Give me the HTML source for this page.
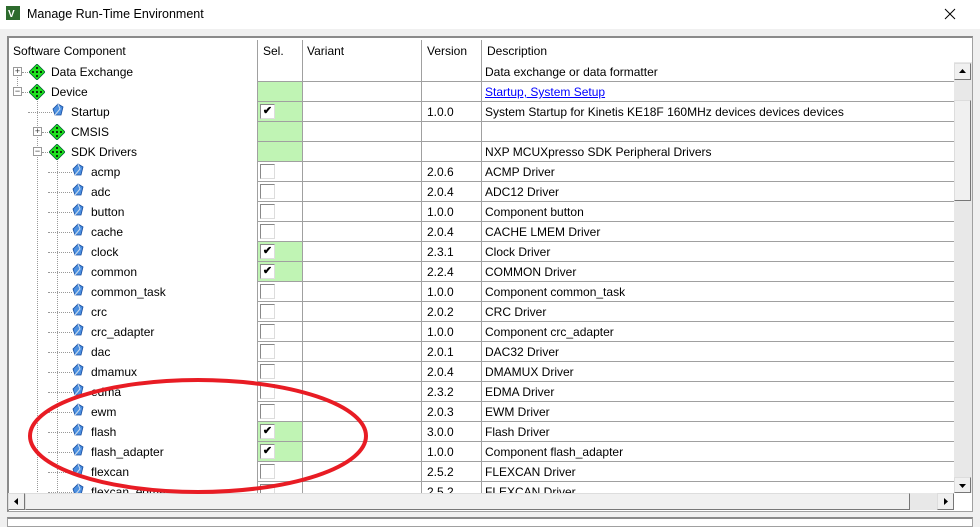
<!DOCTYPE html>
<html><head><style>
*{margin:0;padding:0;box-sizing:border-box}
body{width:980px;height:524px;background:#f0f0f0;font-family:"Liberation Sans",sans-serif;font-size:12px;color:#000;position:relative;overflow:hidden}
.title{position:absolute;left:0;top:0;width:980px;height:29px;background:#fff}
.title span{position:absolute;left:27px;top:7px;font-size:12.5px}
.panel{position:absolute;left:7px;top:36px;width:966px;height:476px;background:#fff;border:1px solid #a0a0a0;border-top:2px solid #8a8a8a;border-left:2px solid #8a8a8a}
.hdr{position:absolute;top:44px;font-size:12px}
.vl{position:absolute;width:1px;background:#a0a0a0}
.row{position:absolute;left:0;height:20px;width:954px}
.hl{position:absolute;left:257px;width:697px;height:1px;background:#a0a0a0}
.t{position:absolute;top:3px;white-space:nowrap}
.green{position:absolute;left:258px;width:44px;height:19px;background:#c0f4b4}
.cb{position:absolute;left:260px;width:15px;height:15px;border:1px solid #888;border-right-color:#ddd;border-bottom-color:#ddd;background:#fff;font-size:11px;line-height:13px;text-align:center;font-weight:bold}
.box{position:absolute;width:9px;height:9px;border:1px solid #999;background:#fff;font-size:9px;line-height:7px;text-align:center;color:#333}
.dot{position:absolute;border-top:1px dotted #999}
.dotv{position:absolute;border-left:1px dotted #999}
.sb{position:absolute;background:#f0f0f0;border:1px solid #ddd;border-right-color:#777;border-bottom-color:#777}
</style></head><body>
<div class="title"><svg style="position:absolute;left:6px;top:6px" width="14" height="14"><rect width="14" height="14" fill="#2d6b2d"/><text x="2" y="11" font-size="10" fill="#fff" font-family="Liberation Sans" font-weight="bold">V</text></svg><span>Manage Run-Time Environment</span>
<svg style="position:absolute;left:944px;top:8px" width="12" height="12"><path d="M1 1L11 11M11 1L1 11" stroke="#000" stroke-width="1"/></svg></div>
<div class="panel"></div>
<div class="hdr" style="left:13px">Software Component</div>
<div class="hdr" style="left:263px">Sel.</div>
<div class="hdr" style="left:307px">Variant</div>
<div class="hdr" style="left:427px">Version</div>
<div class="hdr" style="left:487px">Description</div>
<div class="vl" style="left:257px;top:40px;height:453px"></div>
<div class="vl" style="left:302px;top:40px;height:453px"></div>
<div class="vl" style="left:421px;top:40px;height:453px"></div>
<div class="vl" style="left:481px;top:40px;height:453px"></div>
<div style="position:absolute;left:0;top:62px;width:954px;height:431px;overflow:hidden" id="rows">
<div class="dotv" style="left:17px;top:10px;height:20px"></div>
<div class="dotv" style="left:37px;top:30px;height:400px"></div>
<div class="dotv" style="left:57px;top:90px;height:340px"></div>
</div>
<script>
var R=[
[0,'+','Data Exchange',-1,'','Data exchange or data formatter'],
[0,'-','Device',2,'','<u style="color:#00f">Startup, System Setup</u>'],
[1,'','Startup',1,'1.0.0','System Startup for Kinetis KE18F 160MHz devices devices devices'],
[1,'+','CMSIS',2,'',''],
[1,'-','SDK Drivers',2,'','NXP MCUXpresso SDK Peripheral Drivers'],
[2,'','acmp',0,'2.0.6','ACMP Driver'],
[2,'','adc',0,'2.0.4','ADC12 Driver'],
[2,'','button',0,'1.0.0','Component button'],
[2,'','cache',0,'2.0.4','CACHE LMEM Driver'],
[2,'','clock',1,'2.3.1','Clock Driver'],
[2,'','common',1,'2.2.4','COMMON Driver'],
[2,'','common_task',0,'1.0.0','Component common_task'],
[2,'','crc',0,'2.0.2','CRC Driver'],
[2,'','crc_adapter',0,'1.0.0','Component crc_adapter'],
[2,'','dac',0,'2.0.1','DAC32 Driver'],
[2,'','dmamux',0,'2.0.4','DMAMUX Driver'],
[2,'','edma',0,'2.3.2','EDMA Driver'],
[2,'','ewm',0,'2.0.3','EWM Driver'],
[2,'','flash',1,'3.0.0','Flash Driver'],
[2,'','flash_adapter',1,'1.0.0','Component flash_adapter'],
[2,'','flexcan',0,'2.5.2','FLEXCAN Driver'],
[2,'','flexcan_edma',0,'2.5.2','FLEXCAN Driver']];
var h='';
R.forEach(function(r,i){
 var y=i*20,l=r[0],x=11+l*20;
 h+='<div class="row" style="top:'+y+'px">';
 if(r[3]==1||r[3]==2) h+='<div class="green" style="top:0"></div>';
 if(r[3]==1||r[3]==0) h+='<div class="cb" style="top:2px">'+(r[3]==1?'&#10004;':'')+'</div>';
 if(r[1]) h+='<div class="box" style="left:'+(x+2)+'px;top:5px">'+(r[1]=='+'?'+':'&minus;')+'</div><div class="dot" style="left:'+(x+11)+'px;top:10px;width:6px"></div>';
 else h+='<div class="dot" style="left:'+(x-3)+'px;top:10px;width:24px"></div>';
 if(r[1]) h+='<svg style="position:absolute;left:'+(x+18)+'px;top:2px" width="16" height="16"><path d="M8 0L16 8L8 16L0 8Z" fill="#1ee01e" stroke="#063" stroke-width="0.8"/><g fill="#000"><circle cx="8" cy="4" r="1"/><circle cx="8" cy="12" r="1"/><circle cx="4" cy="8" r="1"/><circle cx="12" cy="8" r="1"/><circle cx="8" cy="8" r="1"/></g></svg>';
 else h+='<svg style="position:absolute;left:'+(x+21)+'px;top:1px" width="12" height="14"><path d="M6 1L11 4L9 12L3 12L1 6Z" fill="#4a8ee0" stroke="#1a4fa0" stroke-width="0.8"/><path d="M6 1L8 6L3 12" fill="none" stroke="#cde" stroke-width="1"/></svg>';
 h+='<div class="t" style="left:'+(51+l*20)+'px">'+r[2]+'</div>';
 h+='<div class="t" style="left:427px">'+r[4]+'</div><div class="t" style="left:485px">'+r[5]+'</div>';
 h+='<div class="hl" style="top:19px"></div></div>';
});
document.getElementById('rows').insertAdjacentHTML('beforeend',h);
</script>
<div style="position:absolute;left:954px;top:62px;width:18px;height:431px;background:#e8e8e8"></div>
<div class="sb" style="left:954px;top:63px;width:17px;height:17px"><svg width="15" height="15"><path d="M4 9H11L7.5 5Z" fill="#000"/></svg></div>
<div class="sb" style="left:954px;top:100px;width:17px;height:101px"></div>
<div class="sb" style="left:954px;top:477px;width:17px;height:16px"><svg width="15" height="15"><path d="M4 6H11L7.5 10Z" fill="#000"/></svg></div>
<div style="position:absolute;left:8px;top:493px;width:946px;height:17px;background:#e8e8e8"></div>
<div class="sb" style="left:8px;top:493px;width:17px;height:17px"><svg width="15" height="15"><path d="M9 4V11L5 7.5Z" fill="#000"/></svg></div>
<div class="sb" style="left:25px;top:493px;width:885px;height:17px"></div>
<div class="sb" style="left:937px;top:493px;width:17px;height:17px"><svg width="15" height="15"><path d="M6 4V11L10 7.5Z" fill="#000"/></svg></div>
<div style="position:absolute;left:7px;top:517px;width:966px;height:10px;background:#fff;border:1px solid #a0a0a0;border-top:2px solid #8a8a8a"></div>
<svg style="position:absolute;left:0;top:0" width="980" height="524"><ellipse cx="198" cy="436" rx="168" ry="56" fill="none" stroke="#e81c24" stroke-width="4"/></svg>
</body></html>
